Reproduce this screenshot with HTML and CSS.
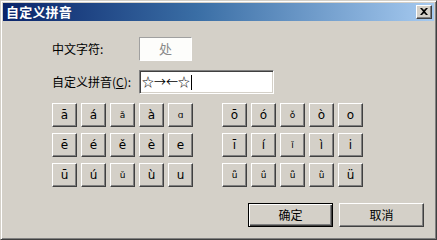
FILE: index.html
```html
<!DOCTYPE html>
<html>
<head>
<meta charset="utf-8">
<link rel="stylesheet" href="styles.css">
</head>
<body>
<div class="window">
  <div class="titlebar">
    <span class="title">自定义拼音</span>
    <button class="close" type="button">
      <svg width="8" height="7" viewBox="0 0 8 7"><path d="M0 0h2l2 2 2-2h2L5 3.5 8 7H6L4 5 2 7H0l3-3.5z" fill="#000"/></svg>
    </button>
  </div>
  <div class="content">
    <div class="row">
      <span class="label">中文字符:</span>
      <span class="readonly">处</span>
    </div>
    <div class="row">
      <span class="label">自定义拼音(<u>C</u>):</span>
      <span class="input"><span class="itext">☆→←☆</span><span class="caret"></span></span>
    </div>
    <div class="grids">
      <div class="grid">
        <button class="key">ā</button><button class="key">á</button><button class="key small">ǎ</button><button class="key">à</button><button class="key small">ɑ</button>
        <button class="key">ē</button><button class="key">é</button><button class="key">ě</button><button class="key">è</button><button class="key">e</button>
        <button class="key">ū</button><button class="key">ú</button><button class="key small">ǔ</button><button class="key">ù</button><button class="key">u</button>
      </div>
      <div class="grid">
        <button class="key">ō</button><button class="key">ó</button><button class="key small">ǒ</button><button class="key">ò</button><button class="key">o</button>
        <button class="key">ī</button><button class="key">í</button><button class="key small">ǐ</button><button class="key">ì</button><button class="key">i</button>
        <button class="key small">ǖ</button><button class="key small">ǘ</button><button class="key small">ǚ</button><button class="key small">ǜ</button><button class="key">ü</button>
      </div>
    </div>
    <div class="actions">
      <button class="btn default">确定</button>
      <button class="btn">取消</button>
    </div>
  </div>
</div>
</body>
</html>
```
FILE: styles.css
```css
html, body {
  margin: 0;
  padding: 0;
  background: #d4d0c8;
}
body {
  width: 437px;
  height: 240px;
  overflow: hidden;
  font-family: "Noto Sans CJK SC", "DejaVu Sans", sans-serif;
  font-size: 12px;
  color: #000;
}
.window {
  box-sizing: border-box;
  width: 437px;
  height: 240px;
  background: #d4d0c8;
  border: 1px solid;
  border-color: #d4d0c8 #404040 #404040 #d4d0c8;
  box-shadow: inset 1px 1px 0 #ffffff, inset -1px -1px 0 #808080;
  padding: 2px;
  display: flex;
  flex-direction: column;
}
.titlebar {
  height: 18px;
  flex: none;
  display: flex;
  align-items: flex-start;
  justify-content: space-between;
  background: linear-gradient(to right, #0a246a 0%, #3a6ea5 45%, #a6caf0 100%);
}
.title {
  color: #fff;
  font-weight: bold;
  font-size: 13px;
  line-height: 18px;
  padding-left: 3px;
  letter-spacing: 0.2px;
}
.close {
  box-sizing: border-box;
  width: 16px;
  height: 14px;
  margin: 2px 2px 0 0;
  padding: 0;
  background: #d4d0c8;
  border: 1px solid;
  border-color: #ffffff #404040 #404040 #ffffff;
  box-shadow: inset -1px -1px 0 #808080;
  display: flex;
  align-items: center;
  justify-content: center;
}
.close svg { display: block; margin: 0 1px 1px 0; }
.content {
  padding: 16px 10px 0 49px;
  display: flex;
  flex-direction: column;
}
.row {
  display: flex;
  align-items: center;
  height: 24px;
  margin-bottom: 9px;
}
.label {
  width: 87px;
  flex: none;
  line-height: 24px;
}
.label u { text-decoration: underline; }
.readonly {
  box-sizing: border-box;
  width: 53px;
  height: 24px;
  border: 1px solid;
  border-color: #a0a0a0 #ffffff #ffffff #a0a0a0;
  background: #fdfdfb;
  color: #8a8a8a;
  text-align: center;
  font-size: 13px;
  line-height: 22px;
}
.input {
  box-sizing: border-box;
  width: 135px;
  height: 24px;
  border: 1px solid;
  border-color: #808080 #ffffff #ffffff #808080;
  box-shadow: inset 1px 1px 0 #404040, inset -1px -1px 0 #d4d0c8;
  background: #fff;
  display: flex;
  align-items: center;
  padding-left: 2px;
}
.itext {
  font-family: "Noto Sans CJK SC", sans-serif;
  font-size: 12px;
  line-height: 16px;
}
.caret {
  width: 1px;
  height: 15px;
  background: #000;
  margin-left: 1px;
}
.grids {
  display: flex;
  gap: 29px;
}
.grid {
  display: grid;
  grid-template-columns: repeat(5, 25px);
  grid-auto-rows: 24px;
  column-gap: 4px;
  row-gap: 6px;
}
.key, .btn {
  box-sizing: border-box;
  margin: 0;
  padding: 0;
  background: #d4d0c8;
  border: 1px solid;
  border-color: #ffffff #404040 #404040 #ffffff;
  box-shadow: inset -1px -1px 0 #808080;
  font-family: "DejaVu Sans", sans-serif;
  font-size: 12px;
  color: #000;
  line-height: 20px;
  text-align: center;
}
.key.small { font-size: 9px; }
.actions {
  display: flex;
  justify-content: flex-end;
  gap: 6px;
  margin-top: 16px;
}
.btn {
  width: 85px;
  height: 24px;
  font-family: "Noto Sans CJK SC", sans-serif;
  font-size: 12px;
}
.btn.default {
  border: 1px solid #000;
  box-shadow: inset 1px 1px 0 #ffffff, inset -1px -1px 0 #404040, inset -2px -2px 0 #808080;
}
```
